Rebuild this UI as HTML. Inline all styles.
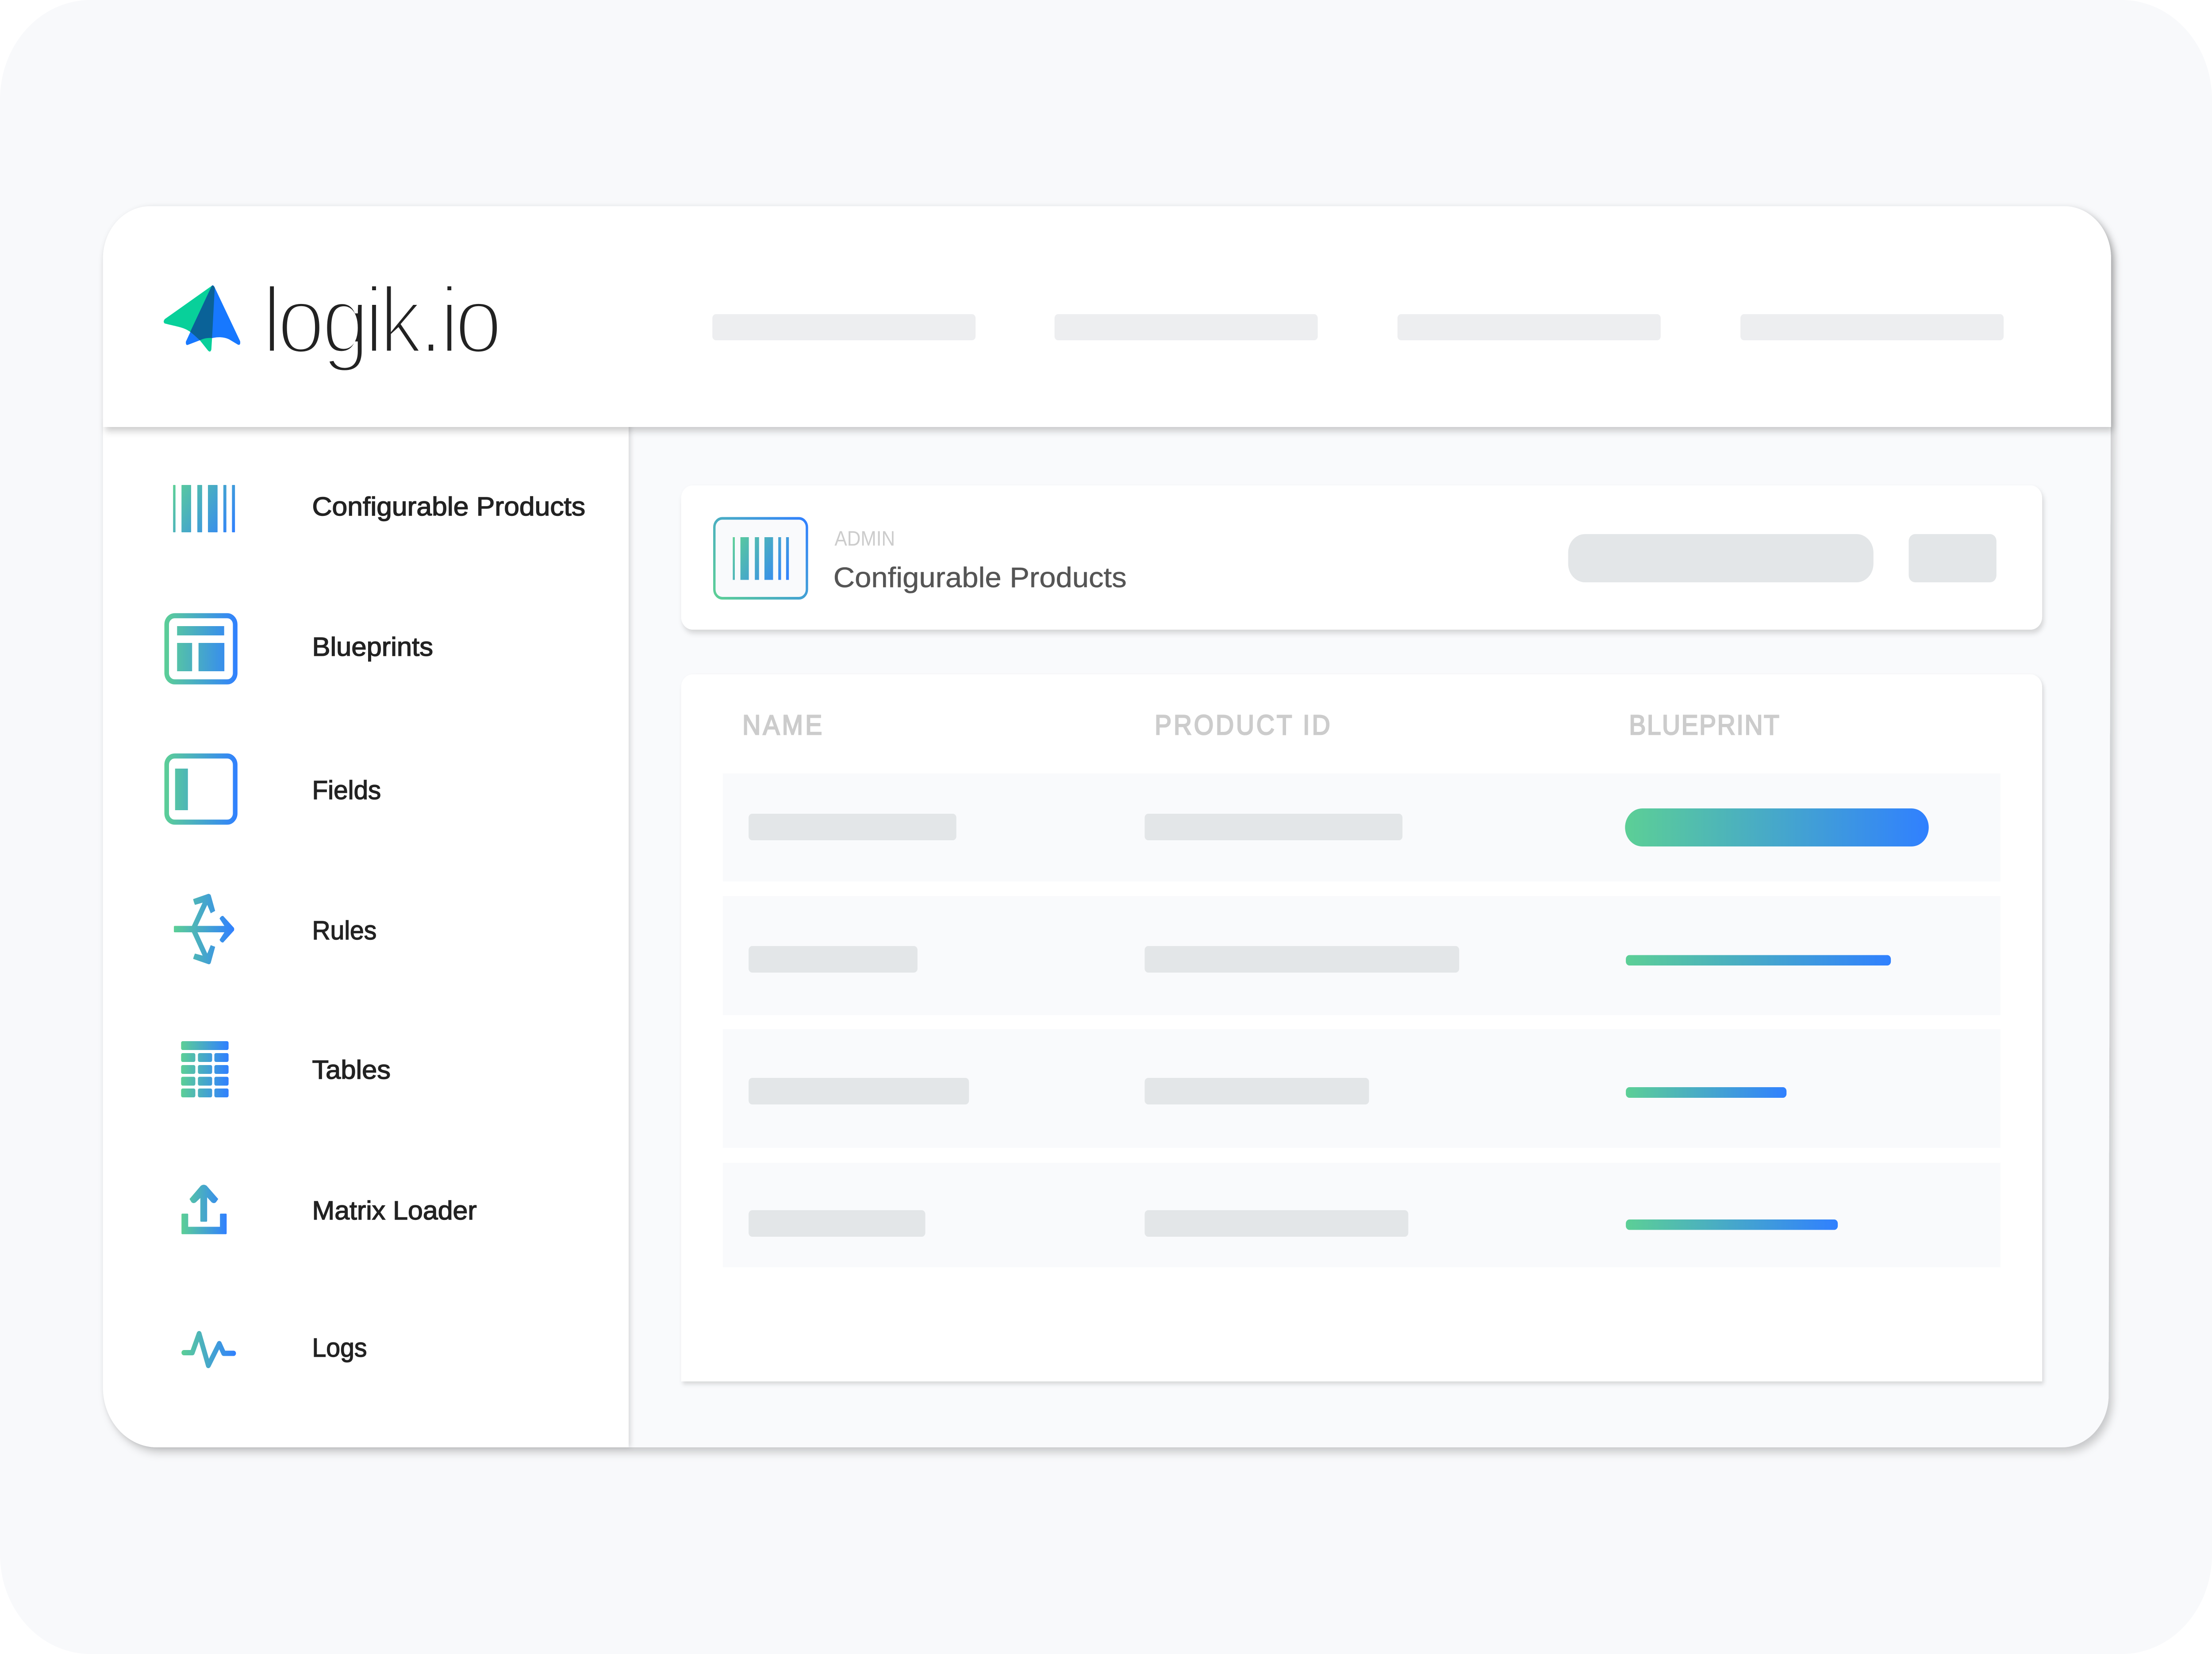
<!DOCTYPE html>
<html lang="en">
<head>
<meta charset="utf-8">
<title>logik.io</title>
<style>
html,body{margin:0;padding:0;background:#fff;width:100%;height:100%;overflow:hidden}
svg{display:block;width:100vw;height:100vh}
text{font-family:"Liberation Sans",sans-serif}
.nav{font-size:59px;fill:#222;stroke:#222;stroke-width:1.5px}
.th{font-size:63px;fill:#ccc;stroke:#ccc;stroke-width:2.6px}
</style>
</head>
<body>
<svg xmlns="http://www.w3.org/2000/svg" viewBox="0 0 5521 3738" preserveAspectRatio="none">
<defs>
<filter id="sCard" filterUnits="userSpaceOnUse" x="150" y="380" width="5250" height="3020"><feDropShadow dx="9" dy="11" stdDeviation="10" flood-color="#000" flood-opacity=".2"/></filter>
<filter id="sHead" filterUnits="userSpaceOnUse" x="150" y="380" width="5250" height="700"><feDropShadow dx="6" dy="9" stdDeviation="8" flood-color="#000" flood-opacity=".2"/></filter>
<filter id="sSide" filterUnits="userSpaceOnUse" x="200" y="900" width="1500" height="2450"><feDropShadow dx="5" dy="0" stdDeviation="6" flood-color="#000" flood-opacity=".13"/></filter>
<filter id="sTop" filterUnits="userSpaceOnUse" x="1650" y="1050" width="3520" height="420"><feDropShadow dx="4" dy="8" stdDeviation="6" flood-color="#000" flood-opacity=".15"/></filter>
<filter id="sTab" filterUnits="userSpaceOnUse" x="1650" y="1480" width="3520" height="1700"><feDropShadow dx="4" dy="6" stdDeviation="5" flood-color="#000" flood-opacity=".14"/></filter>
<linearGradient id="gBar" gradientUnits="userSpaceOnUse" x1="432" y1="1096" x2="586" y2="1203"><stop offset="0" stop-color="#5ccf96"/><stop offset="1" stop-color="#3080ff"/></linearGradient>
<linearGradient id="gBp" gradientUnits="userSpaceOnUse" x1="410" y1="0" x2="593" y2="0"><stop offset="0" stop-color="#5ccf96"/><stop offset="1" stop-color="#3080ff"/></linearGradient>
<linearGradient id="gRu" gradientUnits="userSpaceOnUse" x1="434" y1="0" x2="584" y2="0"><stop offset="0" stop-color="#5ccf96"/><stop offset="1" stop-color="#3080ff"/></linearGradient>
<linearGradient id="gTa" gradientUnits="userSpaceOnUse" x1="452" y1="0" x2="570" y2="0"><stop offset="0" stop-color="#5ccf96"/><stop offset="1" stop-color="#3080ff"/></linearGradient>
<linearGradient id="gLo" gradientUnits="userSpaceOnUse" x1="453" y1="0" x2="566" y2="0"><stop offset="0" stop-color="#5ccf96"/><stop offset="1" stop-color="#3080ff"/></linearGradient>
<linearGradient id="gLg" gradientUnits="userSpaceOnUse" x1="453" y1="0" x2="589" y2="0"><stop offset="0" stop-color="#5ccf96"/><stop offset="1" stop-color="#3080ff"/></linearGradient>
<linearGradient id="gBox" gradientUnits="userSpaceOnUse" x1="1790" y1="1355" x2="2007" y2="1168"><stop offset="0" stop-color="#5ccf96"/><stop offset="1" stop-color="#3080ff"/></linearGradient>
<linearGradient id="gBar2" gradientUnits="userSpaceOnUse" x1="1829" y1="1214" x2="1969" y2="1310"><stop offset="0" stop-color="#5ccf96"/><stop offset="1" stop-color="#3080ff"/></linearGradient>
<linearGradient id="gP1" gradientUnits="userSpaceOnUse" x1="4056" y1="0" x2="4814" y2="0"><stop offset="0" stop-color="#5ccf96"/><stop offset="1" stop-color="#3080ff"/></linearGradient>
<linearGradient id="gP2" gradientUnits="userSpaceOnUse" x1="4058" y1="0" x2="4720" y2="0"><stop offset="0" stop-color="#5ccf96"/><stop offset="1" stop-color="#3080ff"/></linearGradient>
<linearGradient id="gP3" gradientUnits="userSpaceOnUse" x1="4058" y1="0" x2="4459" y2="0"><stop offset="0" stop-color="#5ccf96"/><stop offset="1" stop-color="#3080ff"/></linearGradient>
<linearGradient id="gP4" gradientUnits="userSpaceOnUse" x1="4058" y1="0" x2="4587" y2="0"><stop offset="0" stop-color="#5ccf96"/><stop offset="1" stop-color="#3080ff"/></linearGradient>
</defs>

<!-- outer background -->
<rect x="0" y="0" width="5521" height="3738" rx="225" ry="225" fill="#f8f9fb"/>

<!-- main card -->
<path d="M375,466 H5152 A117,117 0 0 1 5269,583 L5263,3153 A118,118 0 0 1 5145,3271 H392 A135,135 0 0 1 257,3136 V584 A118,118 0 0 1 375,466 Z" fill="#f9fafc" filter="url(#sCard)"/>

<!-- sidebar -->
<path d="M257,950 H1569 V3271 H392 A135,135 0 0 1 257,3136 Z" fill="#fff" filter="url(#sSide)"/>

<!-- header -->
<path d="M375,466 H5152 A117,117 0 0 1 5269,583 V965 H257 V584 A118,118 0 0 1 375,466 Z" fill="#fff" filter="url(#sHead)"/>

<!-- logo mark -->
<path d="M530,645 L411.5,721 Q406,727 411,731 C440,738 458,739 474.7,750 C488,760 492,763 498.8,769 L519,792 Q525,798 527.5,790 L529.3,764 L536,650 Z" fill="#08d09a"/>
<path d="M528,647 Q531,642 535,648 L599.3,771 Q601,781 594,779 L572,767 C555,760 540,762 530,764 C518,762 507,765 498.8,769 L470,779 Q463,782 464,772 Z" fill="#1778ff"/>
<path d="M528,647 Q531,642 536,650 L529.3,764 C518,763 508,765 498.8,769 C490,762 485,757 474.7,750 Z" fill="#0a6298"/>

<!-- logo text -->
<text x="655 692 803 910 947 1046 1098 1135" y="797" font-size="213" fill="#222" stroke="#fff" stroke-width="9">logik.io</text>

<!-- top nav placeholders -->
<rect x="1778" y="710" width="657" height="59" rx="9" fill="#edeef0"/>
<rect x="2632" y="710" width="657" height="59" rx="9" fill="#edeef0"/>
<rect x="3488" y="710" width="657" height="59" rx="9" fill="#edeef0"/>
<rect x="4344" y="710" width="657" height="59" rx="9" fill="#edeef0"/>

<!-- sidebar icons -->
<g fill="url(#gBar)">
<rect x="432" y="1096" width="6" height="107" rx="1"/>
<rect x="453" y="1096" width="24" height="107" rx="1"/>
<rect x="492.5" y="1096" width="12" height="107" rx="1"/>
<rect x="519" y="1096" width="24" height="107" rx="1"/>
<rect x="557.5" y="1096" width="7.5" height="107" rx="1"/>
<rect x="579" y="1096" width="7.5" height="107" rx="1"/>
</g>

<rect x="416" y="1391.5" width="171" height="149.5" rx="20" fill="none" stroke="url(#gBp)" stroke-width="11.5"/>
<g fill="url(#gBp)">
<rect x="442" y="1415" width="117.5" height="21"/>
<rect x="442" y="1453" width="37.5" height="64"/>
<rect x="495.5" y="1453" width="64.5" height="64"/>
</g>

<rect x="416" y="1708.5" width="171" height="149.5" rx="20" fill="none" stroke="url(#gBp)" stroke-width="11.5"/>
<rect x="437" y="1737" width="32" height="94" fill="url(#gBp)"/>

<path fill="url(#gRu)" d="M436,2092.5 H479 L505.7,2040 L486.7,2045 Q484,2040 482,2032 L520,2020 Q524,2020 526,2023 L537,2058.6 L526,2064 L517.3,2045 L493,2092.5 H560 L548,2076 Q552,2069 557,2070 L584,2097 Q585,2100 584,2103 L557,2130 Q552,2131 548,2124 L560,2107 H493 L517.3,2155 L526,2136 L537,2139.7 L526,2176 Q524,2180 520,2179 L482,2167 Q484,2160 486.7,2155 L505.7,2159.6 L479,2107 H436 Q434,2107 434,2105 V2095 Q434,2092.5 436,2092.5 Z"/>

<g fill="url(#gTa)">
<rect x="452" y="2353" width="118.5" height="20" rx="4"/>
<rect x="452" y="2380" width="35.5" height="20" rx="4"/><rect x="494" y="2380" width="35.5" height="20" rx="4"/><rect x="535" y="2380" width="35.5" height="20" rx="4"/>
<rect x="452" y="2407" width="35.5" height="20" rx="4"/><rect x="494" y="2407" width="35.5" height="20" rx="4"/><rect x="535" y="2407" width="35.5" height="20" rx="4"/>
<rect x="452" y="2433.5" width="35.5" height="20" rx="4"/><rect x="494" y="2433.5" width="35.5" height="20" rx="4"/><rect x="535" y="2433.5" width="35.5" height="20" rx="4"/>
<rect x="452" y="2460" width="35.5" height="20" rx="4"/><rect x="494" y="2460" width="35.5" height="20" rx="4"/><rect x="535" y="2460" width="35.5" height="20" rx="4"/>
</g>

<path fill="url(#gLo)" d="M455,2742.7 H467.7 Q469.7,2742.7 469.7,2744.7 V2772.5 H549 V2744.7 Q549,2742.7 551,2742.7 H563.7 Q565.7,2742.7 565.7,2744.7 V2787 Q565.7,2789.3 563.5,2789.3 H455 Q453,2789.3 453,2787 V2744.7 Q453,2742.7 455,2742.7 Z"/>
<path fill="url(#gLo)" d="M501,2680 Q508.5,2675 516,2680 L544.7,2709.8 L539,2717 Q534,2721 528,2717 L517,2706 V2759 Q517,2761 515,2761 H502 Q500,2761 500,2759 V2707.5 L489,2717 Q483,2721 478,2717 L473,2709.8 Z"/>

<path fill="none" stroke="url(#gLg)" stroke-width="12" stroke-linecap="round" stroke-linejoin="round" d="M459,3057 H480 L497,3014 L520,3086 L547.3,3036.5 L558.3,3058.5 L583,3058.5"/>

<!-- sidebar labels -->
<text class="nav" x="779" y="1165" textLength="682" lengthAdjust="spacingAndGlyphs">Configurable Products</text>
<text class="nav" x="779" y="1482" textLength="302" lengthAdjust="spacingAndGlyphs">Blueprints</text>
<text class="nav" x="779" y="1806" textLength="172" lengthAdjust="spacingAndGlyphs">Fields</text>
<text class="nav" x="779" y="2123" textLength="161" lengthAdjust="spacingAndGlyphs">Rules</text>
<text class="nav" x="779" y="2438" textLength="196" lengthAdjust="spacingAndGlyphs">Tables</text>
<text class="nav" x="779" y="2756" textLength="411" lengthAdjust="spacingAndGlyphs">Matrix Loader</text>
<text class="nav" x="779" y="3066" textLength="137" lengthAdjust="spacingAndGlyphs">Logs</text>

<!-- top card -->
<rect x="1700" y="1097" width="3397" height="326" rx="29" fill="#fff" filter="url(#sTop)"/>
<rect x="1783" y="1171.5" width="231" height="180.5" rx="20" fill="#f9fafc" stroke="url(#gBox)" stroke-width="6"/>
<g fill="url(#gBar2)">
<rect x="1829" y="1214" width="5" height="96.5"/>
<rect x="1848" y="1214" width="21" height="96.5"/>
<rect x="1884" y="1214" width="10.5" height="96.5"/>
<rect x="1908" y="1214" width="21.5" height="96.5"/>
<rect x="1942.5" y="1214" width="7" height="96.5"/>
<rect x="1962" y="1214" width="7" height="96.5"/>
</g>
<text x="2083" y="1233" font-size="47" fill="#ccc" textLength="151" lengthAdjust="spacingAndGlyphs">ADMIN</text>
<text x="2080" y="1327" font-size="64" fill="#555" stroke="#555" stroke-width=".6" textLength="732" lengthAdjust="spacingAndGlyphs">Configurable Products</text>
<rect x="3914" y="1207" width="762" height="109" rx="42" fill="#e3e6e8"/>
<rect x="4764" y="1207" width="219" height="109" rx="16" fill="#e3e6e8"/>

<!-- table card -->
<path d="M1729,1524 H5068 A29,29 0 0 1 5097,1553 V3122 H1700 V1553 A29,29 0 0 1 1729,1524 Z" fill="#fff" filter="url(#sTab)"/>
<text class="th" x="1853" y="1660" textLength="199" lengthAdjust="spacing">NAME</text>
<text class="th" x="2882" y="1660" textLength="438" lengthAdjust="spacing">PRODUCT ID</text>
<text class="th" x="4066" y="1660" textLength="375" lengthAdjust="spacing">BLUEPRINT</text>

<g fill="#f9fafc">
<rect x="1804" y="1748" width="3189" height="244"/>
<rect x="1804" y="2025" width="3189" height="269"/>
<rect x="1804" y="2326" width="3189" height="268"/>
<rect x="1804" y="2628" width="3189" height="236"/>
</g>
<g fill="#e3e6e8">
<rect x="1868.5" y="1839" width="518.5" height="60" rx="9"/>
<rect x="2857" y="1839" width="643.5" height="60" rx="9"/>
<rect x="1868.5" y="2138" width="421.5" height="60" rx="9"/>
<rect x="2857" y="2138" width="785" height="60" rx="9"/>
<rect x="1868.5" y="2436" width="550" height="60" rx="9"/>
<rect x="2857" y="2436" width="560" height="60" rx="9"/>
<rect x="1868.5" y="2735" width="441" height="60" rx="9"/>
<rect x="2857" y="2735" width="658" height="60" rx="9"/>
</g>
<rect x="4056" y="1827" width="758" height="86" rx="43" fill="url(#gP1)"/>
<rect x="4058" y="2158.5" width="661.5" height="23.5" rx="9" fill="url(#gP2)"/>
<rect x="4058" y="2457" width="401" height="24" rx="9" fill="url(#gP3)"/>
<rect x="4058" y="2756" width="529" height="23.5" rx="9" fill="url(#gP4)"/>
</svg>
</body>
</html>
